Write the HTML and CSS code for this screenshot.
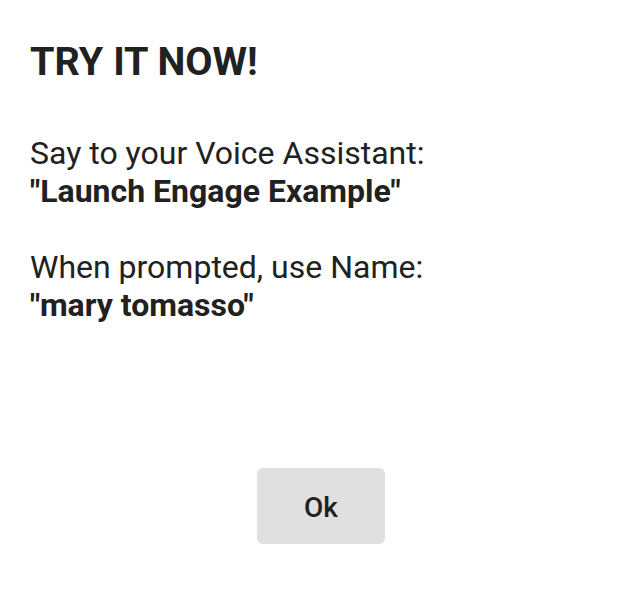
FILE: index.html
```html
<!DOCTYPE html>
<html lang="en">

<head>
  <meta charset="UTF-8">
  <meta name="viewport" content="width=device-width, initial-scale=1.0">
  <title>Try It Now</title>
  <link rel="stylesheet" href="styles.css">
</head>

<body>
  <div class="dialog">
    <h1 class="title">TRY IT NOW!</h1>
    <div class="content">
      <p class="line">Say to your Voice Assistant:</p>
      <p class="line strong">"Launch Engage Example"</p>
      <p class="line gap">When prompted, use Name:</p>
      <p class="line strong">"mary tomasso"</p>
    </div>
    <div class="actions">
      <button class="btn">Ok</button>
    </div>
  </div>
</body>

</html>
```

FILE: styles.css
```css
* {
  margin: 0;
  padding: 0;
  box-sizing: border-box;
  font-family: Roboto, 'Noto Sans', sans-serif;
}

body {
  background: #fff;
  color: #212121;
  width: 642px;
  height: 610px;
}

.dialog {
  padding: 39px 30px 0;
  display: flex;
  flex-direction: column;
}

.title {
  font-size: 39.5px;
  font-weight: 700;
  line-height: 46px;
}

.content {
  margin-top: 49px;
}

.line {
  font-size: 32px;
  line-height: 38px;
}

.strong {
  font-weight: 700;
}

.gap {
  margin-top: 38px;
}

.actions {
  display: flex;
  justify-content: center;
  margin-top: 144px;
}

.btn {
  width: 128px;
  height: 76px;
  padding-top: 3px;
  border: none;
  border-radius: 6px;
  background: #e0e0e0;
  color: #212121;
  font-size: 28px;
  font-weight: 500;
}
```
